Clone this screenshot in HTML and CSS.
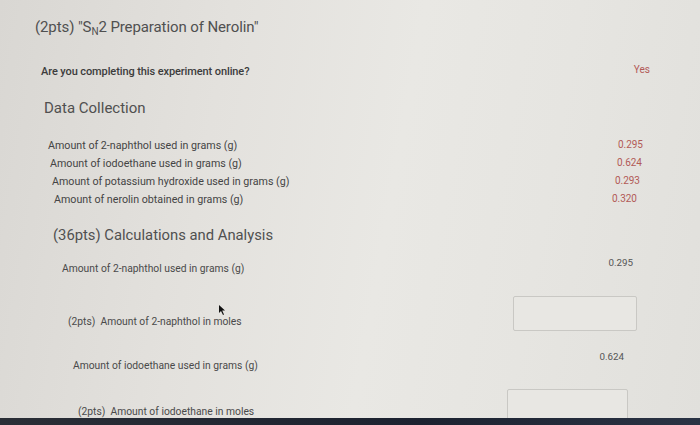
FILE: index.html
```html
<!DOCTYPE html>
<html>
<head>
<meta charset="utf-8">
<link rel="stylesheet" href="styles.css">
</head>
<body>
<div class="page">
  <div class="title">(2pts) "S<sub class="sub">N</sub>2 Preparation of Nerolin"</div>
  <div class="row q">
    <span class="label dark">Are you completing this experiment online?</span>
    <span class="val red yes">Yes</span>
  </div>
  <div class="heading dc">Data Collection</div>
  <div class="list">
    <div class="row li l1"><span class="label">Amount of 2-naphthol used in grams (g)</span><span class="val red v1">0.295</span></div>
    <div class="row li l2"><span class="label">Amount of iodoethane used in grams (g)</span><span class="val red v2">0.624</span></div>
    <div class="row li l3"><span class="label">Amount of potassium hydroxide used in grams (g)</span><span class="val red v3">0.293</span></div>
    <div class="row li l4"><span class="label">Amount of nerolin obtained in grams (g)</span><span class="val red v4">0.320</span></div>
  </div>
  <div class="heading calc">(36pts) Calculations and Analysis</div>
  <div class="row r6"><span class="label small">Amount of 2-naphthol used in grams (g)</span><span class="val grey">0.295</span></div>
  <div class="row r7"><span class="label small">(2pts)&nbsp; Amount of 2-naphthol in moles</span><span class="box b1"></span>
    <svg class="cursor" width="8" height="12" viewBox="0 0 8 12"><path d="M1 1 L1 9 L3 7 L5 11 L6 10.5 L4.2 6.6 L7 6.4 Z" fill="#111"/></svg>
  </div>
  <div class="row r8"><span class="label small">Amount of iodoethane used in grams (g)</span><span class="val grey">0.624</span></div>
  <div class="row r9"><span class="label small">(2pts)&nbsp; Amount of iodoethane in moles</span><span class="box b2"></span></div>
  <div class="bar"></div>
</div>
</body>
</html>
```
FILE: styles.css
```css
html, body {
  margin: 0;
  padding: 0;
}
body {
  width: 700px;
  height: 425px;
  overflow: hidden;
  font-family: Roboto, "Liberation Sans", sans-serif;
  color: #4a4a4a;
}
.page {
  position: relative;
  width: 700px;
  height: 425px;
  display: flex;
  flex-direction: column;
  background: linear-gradient(100deg, #d9d7d3 0%, #e3e1dd 30%, #e9e8e4 55%, #e6e5e1 75%, #e1e0dc 100%);
}
.title {
  height: 54px;
  line-height: 54px;
  padding-left: 35px;
  font-size: 15px;
  color: #505050;
  letter-spacing: -0.1px;
}
.sub {
  font-size: 10px;
  vertical-align: -3px;
  line-height: 0;
}
.row {
  display: flex;
  align-items: center;
}
.label {
  font-size: 10px;
  color: #4a4a4a;
}
.dark {
  color: #3c3c3c;
  font-weight: 500;
  font-size: 11px;
  letter-spacing: -0.1px;
}
.val {
  margin-left: auto;
  font-size: 10px;
}
.red {
  color: #b25a57;
}
.grey {
  color: #555;
  font-size: 9.8px;
}
.q {
  height: 34px;
  padding-left: 41px;
  padding-right: 50px;
}
.yes {
  position: relative;
  top: -2px;
}
.heading {
  font-size: 15px;
  color: #505050;
}
.dc {
  height: 40px;
  line-height: 40px;
  padding-left: 44px;
}
.list {
  padding-top: 8px;
  display: flex;
  flex-direction: column;
}
.li {
  height: 18px;
}
.li .label {
  font-size: 10.7px;
  color: #444;
}
.l1 { padding-left: 48px; padding-right: 57px; }
.l2 { padding-left: 50px; padding-right: 58px; }
.l3 { padding-left: 52px; padding-right: 60px; }
.l4 { padding-left: 54px; padding-right: 63px; }
.li .val { position: relative; top: -1px; }
.calc {
  margin-top: 10px;
  height: 34px;
  line-height: 34px;
  padding-left: 53px;
  font-size: 14.8px;
}
.small {
  font-size: 10.3px;
  color: #4a4a4a;
}
.r6 {
  height: 28px;
  padding-left: 62px;
  padding-right: 67px;
  align-items: flex-start;
}
.r6 .label { padding-top: 10px; }
.r6 .val { padding-top: 5px; }
.r7 {
  position: relative;
  height: 70px;
  padding-left: 68px;
  padding-right: 63px;
  align-items: flex-start;
}
.r7 .label { padding-top: 35px; }
.box {
  margin-left: auto;
  border: 1px solid #c9c8c4;
  border-radius: 2px;
  background: #e8e7e3;
}
.b1 {
  margin-top: 16px;
  width: 122px;
  height: 33px;
}
.cursor {
  position: absolute;
  left: 218px;
  top: 24px;
}
.r8 {
  height: 22px;
  padding-left: 73px;
  padding-right: 76px;
  align-items: flex-start;
}
.r8 .label { padding-top: 9px; }
.r8 .val { padding-top: 1px; }
.r9 {
  height: 46px;
  padding-left: 78px;
  padding-right: 72px;
  align-items: flex-start;
  overflow: hidden;
}
.r9 .label { padding-top: 33px; }
.b2 {
  margin-top: 17px;
  width: 119px;
  height: 40px;
}
.bar {
  height: 7px;
  background: linear-gradient(90deg, #2a2e36, #1c2230 60%, #2a3344);
}
```
